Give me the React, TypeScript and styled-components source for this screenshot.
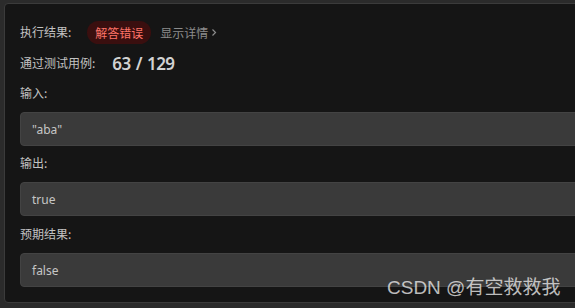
import styled, { createGlobalStyle } from 'styled-components'

const GlobalStyle = createGlobalStyle`
  html, body {
    margin: 0;
    padding: 0;
    background: #2b2b2b;
    overflow: hidden;
  }
  body {
    font-family: 'Noto Sans CJK SC', 'Noto Sans', sans-serif;
  }
`

const Page = styled.div`
  position: relative;
  width: 575px;
  height: 308px;
  overflow: hidden;
  padding: 3px 0 0 4px;
  box-sizing: border-box;
`

const Panel = styled.div`
  width: 640px;
  height: 300px;
  box-sizing: border-box;
  background: #151515;
  border: 1px solid #3b3b3b;
  border-radius: 4px;
  padding: 16px 0 0 15px;
  display: flex;
  flex-direction: column;
`

const Row = styled.div<{ $gap?: number }>`
  display: flex;
  align-items: center;
  height: 24px;
  gap: ${(p) => p.$gap ?? 15}px;
`

const Label = styled.span`
  font-size: 12px;
  line-height: 18px;
  color: #c2c2c2;
`

const Badge = styled.span`
  display: inline-flex;
  align-items: center;
  height: 23px;
  padding: 0 8px;
  margin-left: 1px;
  border-radius: 12px;
  background: #3a0f0f;
  color: #ff7468;
  font-size: 12px;
`

const DetailLink = styled.span`
  margin-left: -6px;
  font-size: 12px;
  color: #8c8c8c;
  display: inline-flex;
  align-items: center;
  gap: 3px;
`

const Count = styled.span`
  font-family: 'Noto Sans', 'Open Sans', sans-serif;
  font-size: 17px;
  font-weight: 600;
  color: #d2d2d2;
  letter-spacing: -0.5px;
  word-spacing: 1px;
`

const Section = styled.div<{ $top: number }>`
  display: flex;
  flex-direction: column;
  margin-top: ${(p) => p.$top}px;
`

const SectionLabel = styled(Label)`
  margin-bottom: 10px;
`

const ValueBox = styled.div`
  height: 34px;
  box-sizing: border-box;
  background: #3a3a3a;
  border: 1px solid #434343;
  border-radius: 4px;
  padding-left: 11px;
  display: flex;
  align-items: center;
  font-family: 'Noto Sans', 'Noto Sans CJK SC', sans-serif;
  font-size: 12px;
  color: #c6c6c6;
`

const Watermark = styled.div`
  position: absolute;
  left: 387px;
  top: 277px;
  font-family: 'Liberation Sans', 'Noto Sans CJK SC', sans-serif;
  font-size: 19px;
  line-height: 22px;
  color: rgba(235, 235, 235, 0.78);
  white-space: nowrap;
`

const sections = [
  { label: '输入:', value: '"aba"', top: 9 },
  { label: '输出:', value: 'true', top: 8 },
  { label: '预期结果:', value: 'false', top: 9 },
]

export default function App() {
  return (
    <>
      <GlobalStyle />
      <Page>
        <Panel>
          <Row>
            <Label>执行结果:</Label>
            <Badge>解答错误</Badge>
            <DetailLink>
              显示详情
              <svg width="6" height="9" viewBox="0 0 6 9">
                <path d="M1.5 1.5 L4.5 4.5 L1.5 7.5" fill="none" stroke="#8c8c8c" strokeWidth="1.2" />
              </svg>
            </DetailLink>
          </Row>
          <Row style={{ marginTop: 7 }} $gap={17}>
            <Label>通过测试用例:</Label>
            <Count>63 / 129</Count>
          </Row>
          {sections.map((s) => (
            <Section key={s.label} $top={s.top}>
              <SectionLabel>{s.label}</SectionLabel>
              <ValueBox>{s.value}</ValueBox>
            </Section>
          ))}
        </Panel>
        <Watermark>CSDN @有空救救我</Watermark>
      </Page>
    </>
  )
}
